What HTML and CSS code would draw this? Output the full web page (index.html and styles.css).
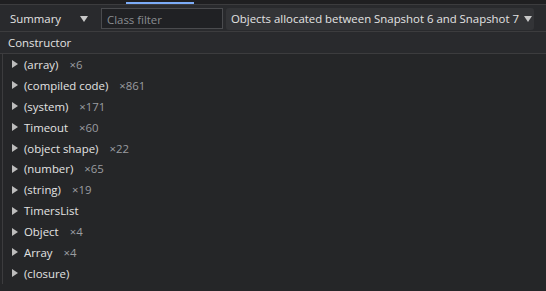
FILE: index.html
```html
<!DOCTYPE html>
<html lang="en">
<head>
    <meta charset="UTF-8">
    <title>Heap Snapshot</title>
    <link rel="stylesheet" href="styles.css">
</head>
<body>

    <div class="tab-strip">
        <div class="tab-active"></div>
    </div>

    <div class="toolbar">
        <div class="view-select">
            <span>Summary</span>
            <span class="arrow"></span>
        </div>
        <input class="class-filter" type="text" placeholder="Class filter">
        <div class="range-select">
            <span>Objects allocated between Snapshot 6 and Snapshot 7</span>
            <span class="arrow"></span>
        </div>
    </div>

    <div class="grid">
        <div class="grid-header">Constructor</div>
        <div class="grid-body">
            <div class="row"><span class="expander"></span><span class="name">(array)</span><span class="count">×6</span></div>
            <div class="row"><span class="expander"></span><span class="name">(compiled code)</span><span class="count">×861</span></div>
            <div class="row"><span class="expander"></span><span class="name">(system)</span><span class="count">×171</span></div>
            <div class="row"><span class="expander"></span><span class="name">Timeout</span><span class="count">×60</span></div>
            <div class="row"><span class="expander"></span><span class="name">(object shape)</span><span class="count">×22</span></div>
            <div class="row"><span class="expander"></span><span class="name">(number)</span><span class="count">×65</span></div>
            <div class="row"><span class="expander"></span><span class="name">(string)</span><span class="count">×19</span></div>
            <div class="row"><span class="expander"></span><span class="name">TimersList</span></div>
            <div class="row"><span class="expander"></span><span class="name">Object</span><span class="count">×4</span></div>
            <div class="row"><span class="expander"></span><span class="name">Array</span><span class="count">×4</span></div>
            <div class="row"><span class="expander"></span><span class="name">(closure)</span></div>
        </div>
    </div>

</body>
</html>
```

FILE: styles.css
```css
* {
    margin: 0;
    padding: 0;
    box-sizing: border-box;
}

body {
    background: #252628;
    color: #e3e3e3;
    font-family: 'Open Sans', 'Noto Sans', Arial, sans-serif;
    font-size: 11.4px;
    width: 546px;
    height: 291px;
    overflow: hidden;
    white-space: nowrap;
}

.tab-strip {
    height: 5px;
    background: #1f1f21;
    border-bottom: 1px solid #3c3c3e;
    position: relative;
}

.tab-active {
    position: absolute;
    left: 126px;
    width: 68px;
    top: 2px;
    height: 2px;
    background: #7cacf8;
}

.toolbar {
    height: 27px;
    background: #292a2d;
    border-bottom: 1px solid #3c3c3e;
    display: flex;
    align-items: center;
    padding-top: 1px;
}

.view-select {
    width: 96px;
    display: flex;
    align-items: center;
    justify-content: space-between;
    padding: 0 8px 0 10px;
}

.arrow {
    width: 0;
    height: 0;
    border-left: 4px solid transparent;
    border-right: 4px solid transparent;
    border-top: 6px solid #c8c8c8;
}

.class-filter {
    width: 122px;
    height: 21px;
    margin-left: 5px;
    background: #202124;
    border: 1px solid #4a4b4e;
    color: #e3e3e3;
    font-family: inherit;
    font-size: 11.4px;
    padding: 1px 5px 0;
    outline: none;
}

.class-filter::placeholder {
    color: #8a8d91;
}

.range-select {
    margin-left: 3px;
    height: 22px;
    width: 308px;
    background: #333437;
    border-radius: 3px;
    display: flex;
    align-items: center;
    padding: 0 5px;
    gap: 5px;
}

.grid {
    border-left: 1px solid #3c3c3e;
    margin-left: 2px;
}

.grid-header {
    height: 22px;
    padding: 3px 0 0 8px;
    background: #292a2d;
    border-bottom: 1px solid #3c3c3e;
    margin-left: -3px;
}

.row {
    height: 20.9px;
    display: flex;
    align-items: center;
    padding-left: 9px;
}

.expander {
    width: 0;
    height: 0;
    border-top: 4px solid transparent;
    border-bottom: 4px solid transparent;
    border-left: 6px solid #bdbdbd;
    margin-right: 6px;
}

.count {
    color: #9a9ca0;
    margin-left: 11px;
}
```
